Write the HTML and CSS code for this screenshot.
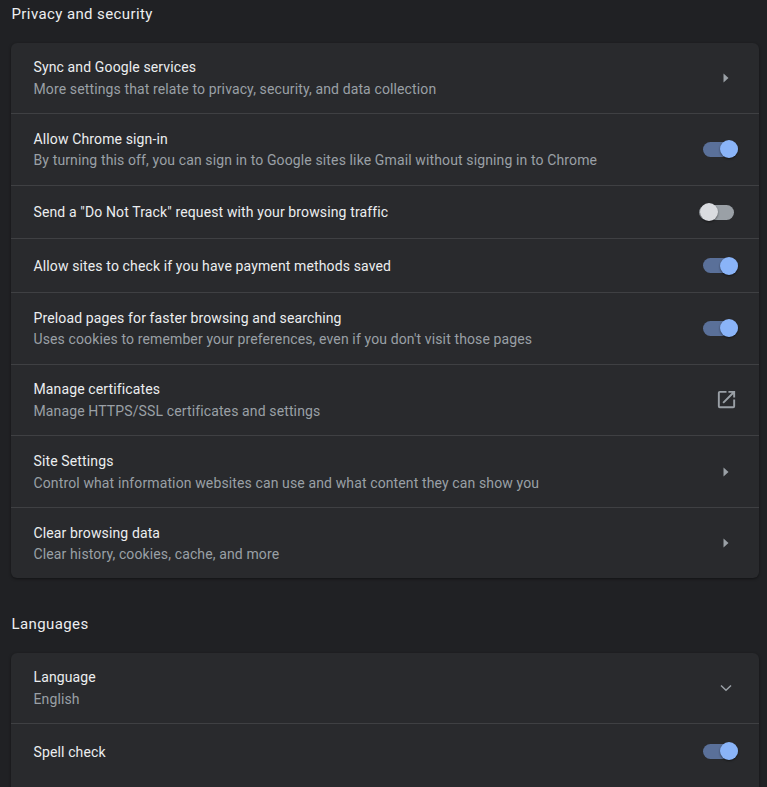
FILE: index.html
```html
<!DOCTYPE html>
<html lang="en">
<head>
<meta charset="utf-8">
<title>Settings</title>
<link rel="stylesheet" href="styles.css">
</head>
<body>
<main class="page">
  <h2 class="section-title first">Privacy and security</h2>
  <section class="card">
    <div class="row two first-row">
      <div class="text"><div class="label">Sync and Google services</div><div class="sub">More settings that relate to privacy, security, and data collection</div></div>
      <svg class="arrow" viewBox="0 0 6 10"><path d="M0.5 0.5L5.5 5L0.5 9.5Z"/></svg>
    </div>
    <div class="row two">
      <div class="text"><div class="label">Allow Chrome sign-in</div><div class="sub">By turning this off, you can sign in to Google sites like Gmail without signing in to Chrome</div></div>
      <div class="toggle on"><span class="knob"></span></div>
    </div>
    <div class="row one">
      <div class="text"><div class="label">Send a "Do Not Track" request with your browsing traffic</div></div>
      <div class="toggle off"><span class="knob"></span></div>
    </div>
    <div class="row one">
      <div class="text"><div class="label">Allow sites to check if you have payment methods saved</div></div>
      <div class="toggle on"><span class="knob"></span></div>
    </div>
    <div class="row two">
      <div class="text"><div class="label">Preload pages for faster browsing and searching</div><div class="sub">Uses cookies to remember your preferences, even if you don't visit those pages</div></div>
      <div class="toggle on"><span class="knob"></span></div>
    </div>
    <div class="row two">
      <div class="text"><div class="label">Manage certificates</div><div class="sub">Manage HTTPS/SSL certificates and settings</div></div>
      <svg class="launch" viewBox="0 0 24 24"><path d="M19 19H5V5h7V3H5a2 2 0 0 0-2 2v14a2 2 0 0 0 2 2h14a2 2 0 0 0 2-2v-7h-2v7zM14 3v2h3.59l-9.83 9.83 1.41 1.41L19 6.41V10h2V3h-7z"/></svg>
    </div>
    <div class="row two">
      <div class="text"><div class="label">Site Settings</div><div class="sub">Control what information websites can use and what content they can show you</div></div>
      <svg class="arrow" viewBox="0 0 6 10"><path d="M0.5 0.5L5.5 5L0.5 9.5Z"/></svg>
    </div>
    <div class="row two">
      <div class="text"><div class="label">Clear browsing data</div><div class="sub">Clear history, cookies, cache, and more</div></div>
      <svg class="arrow" viewBox="0 0 6 10"><path d="M0.5 0.5L5.5 5L0.5 9.5Z"/></svg>
    </div>
  </section>
  <h2 class="section-title">Languages</h2>
  <section class="card last">
    <div class="row two first-row">
      <div class="text"><div class="label">Language</div><div class="sub">English</div></div>
      <svg class="chevron" viewBox="0 0 12 8"><path d="M1 1.5L6 6.2L11 1.5"/></svg>
    </div>
    <div class="row one tall">
      <div class="text"><div class="label">Spell check</div></div>
      <div class="toggle on"><span class="knob"></span></div>
    </div>
  </section>
</main>
</body>
</html>
```

FILE: styles.css
```css
html, body {
  margin: 0;
  height: 100%;
  overflow: hidden;
  background: #202124;
}
.page {
  font-family: Roboto, "Liberation Sans", sans-serif;
  font-size: 14px;
  padding: 0 8px 0 11px;
  height: 787px;
  overflow: hidden;
  box-sizing: border-box;
}
.section-title {
  margin: 0;
  padding: 37px 0 18.5px 0.5px;
  height: 19px;
  line-height: 19px;
  font-size: 15px;
  font-weight: 450;
  color: #eceef0;
  letter-spacing: 0.4px;
}
.section-title.first {
  padding: 5px 0 19px 0.5px;
}
.card {
  background: #292a2d;
  border-radius: 6px;
  box-shadow: 0 1px 3px rgba(0, 0, 0, 0.45);
}
.card.last {
  padding-bottom: 30px;
}
.row {
  display: flex;
  align-items: center;
  justify-content: space-between;
  box-sizing: border-box;
  padding: 0 21px 0 22.5px;
  border-top: 1px solid #3f4043;
}
.row.two { height: 71.75px; }
.row.two:nth-last-child(1) { height: 71.25px; }
.row.two.first-row {
  border-top: 0;
  height: 70px;
}
.row.one { height: 53.5px; }
.row.tall { height: 56px; }
.label {
  color: #eceef0;
  font-weight: 450;
  line-height: 20.5px;
  padding-top: 1.25px;
  letter-spacing: 0.13px;
}
.sub {
  color: #9aa0a6;
  font-weight: 400;
  line-height: 22px;
  letter-spacing: 0.125px;
}
.arrow {
  width: 6px;
  height: 10px;
  margin-right: 9px;
  fill: #9aa0a6;
}
.launch {
  width: 23px;
  height: 23px;
  fill: #9aa0a6;
  margin-right: 0;
}
.chevron {
  width: 12px;
  height: 8px;
  margin-right: 6px;
  fill: none;
  stroke: #9aa0a6;
  stroke-width: 1.5;
}
.toggle {
  width: 35px;
  height: 15px;
  border-radius: 8px;
  display: flex;
  align-items: center;
}
.toggle.on {
  background: #5a7099;
  justify-content: flex-end;
}
.toggle.off {
  background: #9aa0a6;
  margin-right: 4px;
  justify-content: flex-start;
}
.knob {
  width: 18px;
  height: 18px;
  border-radius: 50%;
  box-shadow: 0 1px 2px rgba(0, 0, 0, 0.5);
}
.on .knob { background: #8ab4f8; }
.off .knob {
  background: #dadce0;
  margin-left: 1px;
}
```
